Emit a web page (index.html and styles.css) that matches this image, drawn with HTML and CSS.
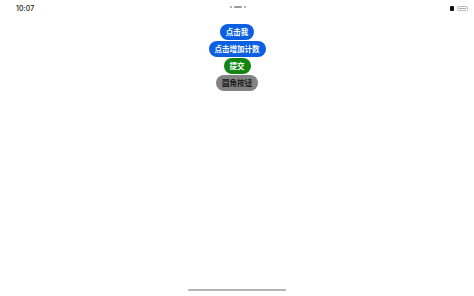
FILE: index.html
```html
<!DOCTYPE html>
<html lang="zh">
<head>
<meta charset="utf-8">
<title>Buttons</title>
<link rel="stylesheet" href="styles.css">
</head>
<body>
<div class="screen">
  <div class="status">
    <span class="time">10:07</span>
    <span class="dots"><i class="dot"></i><i class="pill"></i><i class="dot"></i></span>
    <span class="right">
      <i class="lock"></i>
      <span class="battery"><span class="level"></span></span>
    </span>
  </div>
  <div class="content">
    <button class="btn blue">点击我</button>
    <button class="btn blue">点击增加计数</button>
    <button class="btn green">提交</button>
    <button class="btn gray">圆角按钮</button>
  </div>
  <div class="home"><span class="bar"></span></div>
</div>
</body>
</html>
```
FILE: styles.css
```css
html, body {
  margin: 0;
  padding: 0;
  background: #ffffff;
}
.screen {
  width: 474px;
  height: 296px;
  display: flex;
  flex-direction: column;
  font-family: "Noto Sans CJK SC", "Noto Sans", sans-serif;
}
.status {
  height: 16px;
  display: flex;
  align-items: center;
  justify-content: space-between;
  padding: 0 6px 0 16px;
  box-sizing: border-box;
  position: relative;
}
.time {
  font-family: "Inter", "Liberation Sans", sans-serif;
  font-size: 7px;
  font-weight: 500;
  color: #222;
  letter-spacing: 0.1px;
}
.dots {
  position: absolute;
  left: 230px;
  top: 6px;
  display: flex;
  gap: 2px;
  align-items: center;
}
.dot {
  width: 2px;
  height: 2px;
  border-radius: 1px;
  background: #9a9a9a;
}
.pill {
  width: 8px;
  height: 2px;
  border-radius: 1px;
  background: #9a9a9a;
}
.right {
  display: flex;
  align-items: center;
  gap: 3px;
}
.lock {
  width: 4px;
  height: 5px;
  background: #111;
  border-radius: 1px;
}
.battery {
  width: 11px;
  height: 5px;
  border: 1px solid #bbb;
  border-radius: 2px;
  padding: 1px;
  box-sizing: border-box;
  display: flex;
}
.level {
  flex: 1;
  background: #aaa;
  border-radius: 1px;
}
.content {
  flex: 1;
  display: flex;
  flex-direction: column;
  align-items: center;
  gap: 1px;
  padding-top: 8px;
}
.btn {
  border: none;
  font-family: "Noto Sans CJK SC", sans-serif;
  font-size: 7.5px;
  font-weight: 700;
  line-height: 16px;
  height: 16px;
  padding: 0 6px;
  border-radius: 8px;
  color: #ffffff;
}
.blue { background: #0b5fe0; }
.green { background: #128512; }
.gray { background: #828282; color: #1a1a1a; }
.home {
  height: 7px;
  display: flex;
  justify-content: center;
  align-items: flex-start;
}
.bar {
  width: 98px;
  height: 2px;
  border-radius: 1px;
  background: #b3b3b3;
}
```
